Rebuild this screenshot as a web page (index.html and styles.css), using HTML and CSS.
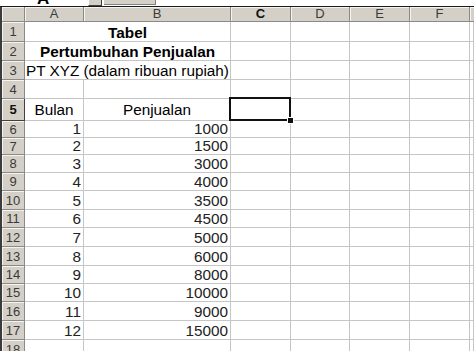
FILE: index.html
```html
<!DOCTYPE html>
<html>
<head>
<meta charset="utf-8">
<link rel="stylesheet" href="styles.css">
</head>
<body>
<div class="toolbar">
  <span class="tb-glyph"><span class="tb-glyph-text">A</span></span>
  <span class="tb-btn"></span>
  <span class="tb-box"></span>
</div>
<div class="sheet">
  <div class="edge"></div>
  <div class="grid">
    <div class="corner"></div>
    <div class="ch">A</div><div class="ch">B</div><div class="ch ch-sel">C</div><div class="ch">D</div><div class="ch">E</div><div class="ch">F</div><div class="ch ch-last"></div>

    <div class="rh">1</div><div class="c span2 center bold">Tabel</div><div class="c"></div><div class="c"></div><div class="c"></div><div class="c"></div><div class="c"></div>
    <div class="rh">2</div><div class="c span2 center bold">Pertumbuhan Penjualan</div><div class="c"></div><div class="c"></div><div class="c"></div><div class="c"></div><div class="c"></div>
    <div class="rh">3</div><div class="c span2 left">PT XYZ (dalam ribuan rupiah)</div><div class="c"></div><div class="c"></div><div class="c"></div><div class="c"></div><div class="c"></div>
    <div class="rh">4</div><div class="c"></div><div class="c"></div><div class="c"></div><div class="c"></div><div class="c"></div><div class="c"></div><div class="c"></div>
    <div class="rh rh-sel">5</div><div class="c center row5">Bulan</div><div class="c center row5">Penjualan</div><div class="c selected"></div><div class="c"></div><div class="c"></div><div class="c"></div><div class="c"></div>

    <div class="rh">6</div><div class="c num">1</div><div class="c num">1000</div><div class="c"></div><div class="c"></div><div class="c"></div><div class="c"></div><div class="c"></div>
    <div class="rh">7</div><div class="c num">2</div><div class="c num">1500</div><div class="c"></div><div class="c"></div><div class="c"></div><div class="c"></div><div class="c"></div>
    <div class="rh">8</div><div class="c num">3</div><div class="c num">3000</div><div class="c"></div><div class="c"></div><div class="c"></div><div class="c"></div><div class="c"></div>
    <div class="rh">9</div><div class="c num">4</div><div class="c num">4000</div><div class="c"></div><div class="c"></div><div class="c"></div><div class="c"></div><div class="c"></div>
    <div class="rh">10</div><div class="c num">5</div><div class="c num">3500</div><div class="c"></div><div class="c"></div><div class="c"></div><div class="c"></div><div class="c"></div>
    <div class="rh">11</div><div class="c num">6</div><div class="c num">4500</div><div class="c"></div><div class="c"></div><div class="c"></div><div class="c"></div><div class="c"></div>
    <div class="rh">12</div><div class="c num">7</div><div class="c num">5000</div><div class="c"></div><div class="c"></div><div class="c"></div><div class="c"></div><div class="c"></div>
    <div class="rh">13</div><div class="c num">8</div><div class="c num">6000</div><div class="c"></div><div class="c"></div><div class="c"></div><div class="c"></div><div class="c"></div>
    <div class="rh">14</div><div class="c num">9</div><div class="c num">8000</div><div class="c"></div><div class="c"></div><div class="c"></div><div class="c"></div><div class="c"></div>
    <div class="rh">15</div><div class="c num">10</div><div class="c num">10000</div><div class="c"></div><div class="c"></div><div class="c"></div><div class="c"></div><div class="c"></div>
    <div class="rh">16</div><div class="c num">11</div><div class="c num">9000</div><div class="c"></div><div class="c"></div><div class="c"></div><div class="c"></div><div class="c"></div>
    <div class="rh">17</div><div class="c num">12</div><div class="c num">15000</div><div class="c"></div><div class="c"></div><div class="c"></div><div class="c"></div><div class="c"></div>
    <div class="rh">18</div><div class="c"></div><div class="c"></div><div class="c"></div><div class="c"></div><div class="c"></div><div class="c"></div><div class="c"></div>
  </div>
</div>
</body>
</html>
```

FILE: styles.css
```css
* { box-sizing: border-box; }
html, body {
  margin: 0;
  padding: 0;
  background: #fff;
  width: 474px;
  height: 351px;
  overflow: hidden;
  font-family: Arial, "Liberation Sans", sans-serif;
}

.toolbar {
  height: 6px;
  display: flex;
  align-items: flex-start;
  background: #fff;
}
.tb-glyph {
  margin-left: 37px;
  width: 14px;
  height: 4px;
  overflow: hidden;
  display: block;
}
.tb-glyph-text {
  display: block;
  font-size: 17px;
  font-weight: bold;
  line-height: 17px;
  margin-top: -10px;
  color: #000;
}
.tb-btn {
  margin-left: 37px;
  width: 14px;
  height: 6px;
  background: #d4d0c8;
  border-left: 1px solid #fff;
  border-right: 1px solid #404040;
  border-bottom: 1px solid #404040;
}
.tb-box {
  margin-left: 2px;
  width: 52px;
  height: 5px;
  background: #d4d0c8;
  border-bottom: 1px solid #808080;
  border-right: 1px solid #808080;
}

.sheet {
  display: flex;
  border-top: 1px solid #1a1a1a;
}
.edge {
  width: 2px;
  background: #3c3c3c;
  flex: none;
}
.grid {
  flex: 1;
  display: grid;
  grid-template-columns: 23px 59px 147px 60px 59px 60px 60px 1fr;
  grid-template-rows: 15px 20px 19px 19px 19px 22px 17px 17px 18px 18px 19px 18px 19px 19px 18px 18px 19px 19px 20px;
}

.corner, .ch, .rh {
  background: #d4d0c8;
  color: #3a3a3a;
  font-size: 13px;
  display: flex;
  align-items: center;
  justify-content: center;
  border-right: 1px solid #8a8a8a;
  border-bottom: 1px solid #8a8a8a;
  box-shadow: inset 1px 1px 0 #f4f3f0;
}
.ch { line-height: 14px; }
.ch-sel { font-weight: bold; color: #111; }
.ch-last { border-right: none; }
.rh-sel {
  font-weight: bold;
  color: #111;
  border-right: 1px solid #404040;
  border-bottom: 1px solid #404040;
}

.c {
  border-right: 1px solid #c6c6c6;
  border-bottom: 1px solid #c6c6c6;
  font-size: 15.3px;
  line-height: 17px;
  color: #000;
  display: flex;
  align-items: flex-end;
  white-space: nowrap;
  overflow: visible;
}
.span2 { grid-column: span 2; }
.center { justify-content: center; }
.left { justify-content: flex-start; padding-left: 1px; }
.bold { font-weight: bold; }
.row5 { padding-bottom: 2px; }
.num {
  justify-content: flex-end;
  padding-right: 2px;
  color: #222;
}

.selected { position: relative; }
.selected::after {
  content: "";
  position: absolute;
  top: -2px;
  left: -2px;
  right: -1px;
  bottom: -1px;
  border: 2px solid #111;
}
.selected::before {
  content: "";
  position: absolute;
  right: -4px;
  bottom: -4px;
  width: 5px;
  height: 5px;
  background: #111;
  border: 1px solid #fff;
  z-index: 2;
}
```
